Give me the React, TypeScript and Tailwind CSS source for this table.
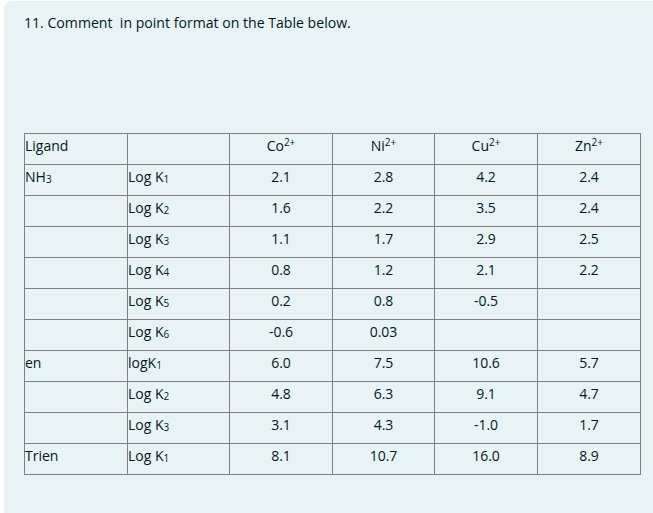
import React from 'react'

type Row = {
  ligand: React.ReactNode
  k: React.ReactNode
  vals: string[]
}

const Sub = ({ children }: { children: React.ReactNode }) => (
  <sub className="text-[10px] leading-none relative top-[1px]">{children}</sub>
)

const Sup = ({ children }: { children: React.ReactNode }) => (
  <sup className="text-[10px] leading-none">{children}</sup>
)

const logK = (n: number, compact = false) => (
  <>
    {compact ? 'logK' : 'Log K'}
    <Sub>{n}</Sub>
  </>
)

const rows: Row[] = [
  { ligand: <>NH<Sub>3</Sub></>, k: logK(1), vals: ['2.1', '2.8', '4.2', '2.4'] },
  { ligand: '', k: logK(2), vals: ['1.6', '2.2', '3.5', '2.4'] },
  { ligand: '', k: logK(3), vals: ['1.1', '1.7', '2.9', '2.5'] },
  { ligand: '', k: logK(4), vals: ['0.8', '1.2', '2.1', '2.2'] },
  { ligand: '', k: logK(5), vals: ['0.2', '0.8', '-0.5', ''] },
  { ligand: '', k: logK(6), vals: ['-0.6', '0.03', '', ''] },
  { ligand: 'en', k: logK(1, true), vals: ['6.0', '7.5', '10.6', '5.7'] },
  { ligand: '', k: logK(2), vals: ['4.8', '6.3', '9.1', '4.7'] },
  { ligand: '', k: logK(3), vals: ['3.1', '4.3', '-1.0', '1.7'] },
  { ligand: 'Trien', k: logK(1), vals: ['8.1', '10.7', '16.0', '8.9'] },
]

const ions = ['Co', 'Ni', 'Cu', 'Zn']

const cell = 'border border-[#808080] align-top p-0 pt-[1px] h-[31px] leading-[22px]'

export default function App() {
  return (
    <div className="h-[513px] w-[653px] overflow-hidden bg-white text-[#001a1e] font-['Open_Sans',sans-serif] text-[14px]">
      <div className="ml-[4px] mt-[1px] h-[540px] rounded-tl-lg bg-[#e7f3f5] pl-[20px] pt-[11px]">
        <p className="whitespace-pre leading-[22px] text-[14.1px]">11. Comment  in point format on the Table below.</p>

        <table className="mt-[99px] w-[616px] table-fixed border-collapse">
          <colgroup>
            <col className="w-[103px]" />
            <col className="w-[102px]" />
            <col className="w-[103px]" />
            <col className="w-[102px]" />
            <col className="w-[103px]" />
            <col className="w-[103px]" />
          </colgroup>
          <thead>
            <tr>
              <td className={`${cell} text-left`}>Ligand</td>
              <td className={cell}></td>
              {ions.map(ion => (
                <td key={ion} className={`${cell} text-center`}>
                  {ion}
                  <Sup>2+</Sup>
                </td>
              ))}
            </tr>
          </thead>
          <tbody>
            {rows.map((row, i) => (
              <tr key={i}>
                <td className={`${cell} text-left`}>{row.ligand}</td>
                <td className={`${cell} text-left`}>{row.k}</td>
                {row.vals.map((v, j) => (
                  <td key={j} className={`${cell} text-center`}>
                    {v}
                  </td>
                ))}
              </tr>
            ))}
          </tbody>
        </table>
      </div>
    </div>
  )
}
